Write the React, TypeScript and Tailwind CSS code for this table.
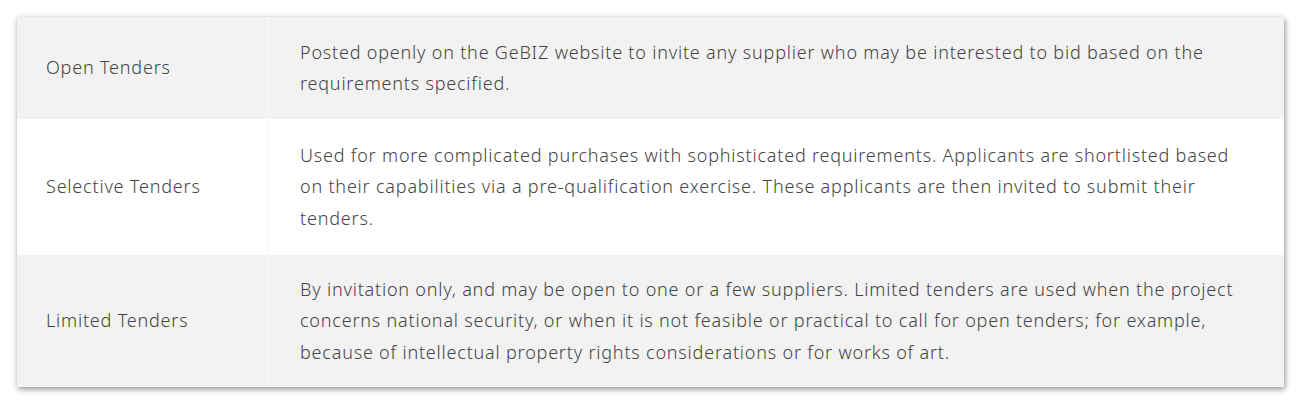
import React from "react";

const rows = [
  {
    title: "Open Tenders",
    lines: [
      "Posted openly on the GeBIZ website to invite any supplier who may be interested to bid based on the",
      "requirements specified.",
    ],
    bg: "bg-[#f2f2f2]",
    pad: "py-[19.5px]",
  },
  {
    title: "Selective Tenders",
    lines: [
      "Used for more complicated purchases with sophisticated requirements. Applicants are shortlisted based",
      "on their capabilities via a pre-qualification exercise. These applicants are then invited to submit their",
      "tenders.",
    ],
    bg: "bg-white",
    pad: "py-[20.5px]",
  },
  {
    title: "Limited Tenders",
    lines: [
      "By invitation only, and may be open to one or a few suppliers. Limited tenders are used when the project",
      "concerns national security, or when it is not feasible or practical to call for open tenders; for example,",
      "because of intellectual property rights considerations or for works of art.",
    ],
    bg: "bg-[#f2f2f2]",
    pad: "py-[19px]",
  },
];

export default function App() {
  return (
    <div className="w-[1300px] h-[404px] bg-white pt-[17px] pl-[17px]" style={{ fontFamily: "'Noto Sans', Lato, sans-serif" }}>
      <div className="w-[1267px] shadow-[1px_2px_6px_rgba(0,0,0,0.45)] text-[#444] text-[18px] leading-[31.5px] tracking-[0.8px] font-light">
        {rows.map((r) => (
          <div key={r.title} className={`flex ${r.bg}`}>
            <div className="w-[252px] shrink-0 flex items-center pl-[29px] border-r border-[#f8f8f8]">
              {r.title}
            </div>
            <div className={`flex-1 pl-[31px] ${r.pad} whitespace-nowrap`}>
              {r.lines.map((l, i) => (
                <div key={i}>{l}</div>
              ))}
            </div>
          </div>
        ))}
      </div>
    </div>
  );
}
